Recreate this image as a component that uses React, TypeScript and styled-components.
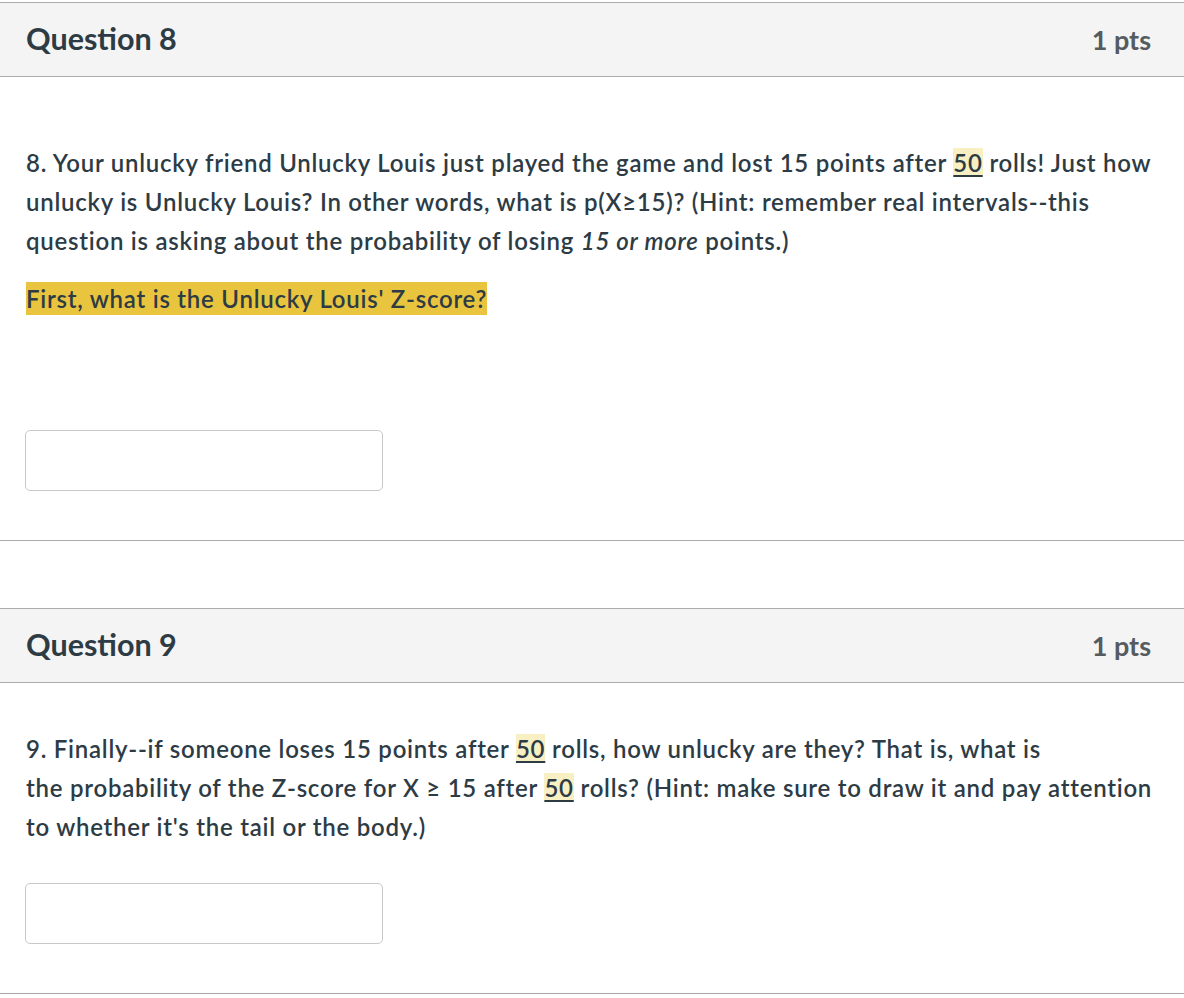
import React from "react";
import styled, { createGlobalStyle } from "styled-components";

const Global = createGlobalStyle`
  html, body { margin: 0; padding: 0; background: #fff; }
  body { font-family: Lato, "Open Sans", sans-serif; color: #2d3b45; }
`;

const Page = styled.div`
  padding-top: 2px;
  display: flex;
  flex-direction: column;
`;

const Question = styled.section<{ $gapAfter?: number }>`
  border-top: 1px solid #ababab;
  border-bottom: 1px solid #ababab;
  margin-bottom: ${(p) => p.$gapAfter ?? 0}px;
`;

const Header = styled.header`
  height: 73px;
  background: #f4f4f4;
  border-bottom: 1px solid #ababab;
  display: flex;
  align-items: center;
  justify-content: space-between;
  padding: 0 33px 0 26px;
`;

const Title = styled.h2`
  margin: 0 0 3px 0;
  font-size: 30.5px;
  font-weight: 700;
  color: #2d3b45;
`;

const Points = styled.span`
  font-size: 27px;
  font-weight: 700;
  color: #555b5e;
`;

const Body = styled.div<{ $top: number; $inputGap: number }>`
  padding: ${(p) => p.$top}px 26px 49px 26px;
  display: flex;
  flex-direction: column;
  align-items: flex-start;

  & > input {
    margin-top: ${(p) => p.$inputGap}px;
  }
`;

const Para = styled.p`
  margin: 0 0 19px 0;
  font-size: 24px;
  line-height: 39px;
  font-weight: 600;
  letter-spacing: 0.75px;
  color: #2d3b45;
  &:last-of-type {
    margin-bottom: 0;
  }
`;

const Mark = styled.span`
  background: #f8efc3;
  text-decoration: underline;
  text-underline-offset: 3px;
  text-decoration-thickness: 2px;
`;

const Highlight = styled.span`
  background: #e9c43f;
  padding: 2px 0;
`;

const Answer = styled.input`
  width: 358px;
  height: 61px;
  box-sizing: border-box;
  border: 1px solid #c8c8c8;
  border-radius: 5px;
  background: #fff;
  margin: 0 0 0 -1px;
  font-size: 20px;
  padding: 0 12px;
  font-family: inherit;
`;

export default function App() {
  return (
    <>
      <Global />
      <Page>
        <Question $gapAfter={67}>
          <Header>
            <Title>Question 8</Title>
            <Points>1 pts</Points>
          </Header>
          <Body $top={66} $inputGap={112}>
            <Para>
              8. Your unlucky friend Unlucky Louis just played the game and lost 15 points after{" "}
              <Mark>50</Mark> rolls! Just how unlucky is Unlucky Louis? In other words, what is
              p(X≥15)? (Hint: remember real intervals--this question is asking about the
              probability of losing <em>15 or more</em> points.)
            </Para>
            <Para>
              <Highlight>First, what is the Unlucky Louis' Z-score?</Highlight>
            </Para>
            <Answer type="text" aria-label="Answer for question 8" />
          </Body>
        </Question>
        <Question>
          <Header>
            <Title>Question 9</Title>
            <Points>1 pts</Points>
          </Header>
          <Body $top={46} $inputGap={37}>
            <Para>
              9. Finally--if someone loses 15 points after <Mark>50</Mark> rolls, how unlucky are
              they? That is, what is
              <br />
              the probability of the Z-score for X ≥ 15 after <Mark>50</Mark> rolls? (Hint: make
              sure to draw it and pay attention to whether it's the tail or the body.)
            </Para>
            <Answer type="text" aria-label="Answer for question 9" />
          </Body>
        </Question>
      </Page>
    </>
  );
}
